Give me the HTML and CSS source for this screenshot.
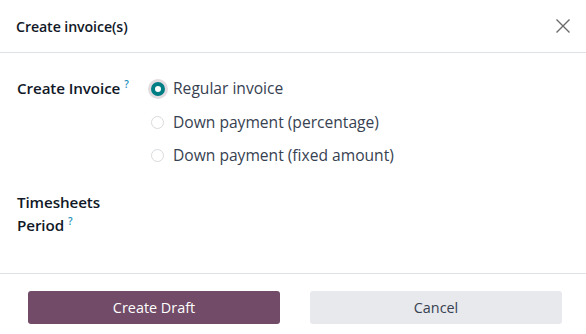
FILE: index.html
```html
<!DOCTYPE html>
<html>
<head>
<meta charset="utf-8">
<link rel="stylesheet" href="styles.css">
</head>
<body>
<div class="dialog">
  <header class="head">
    <h4 class="title">Create invoice(s)</h4>
    <button class="close" aria-label="Close">
      <svg width="16" height="16" viewBox="0 0 16 16"><path d="M1.5 1.5L14.5 14.5M14.5 1.5L1.5 14.5" stroke="#6b6b6b" stroke-width="1.4" fill="none"/></svg>
    </button>
  </header>
  <main class="body">
    <div class="row">
      <div class="label">Create Invoice<sup class="help">?</sup></div>
      <div class="radios">
        <label class="opt"><span class="radio checked"></span>Regular invoice</label>
        <label class="opt"><span class="radio"></span>Down payment (percentage)</label>
        <label class="opt"><span class="radio"></span>Down payment (fixed amount)</label>
      </div>
    </div>
    <div class="row second">
      <div class="label">Timesheets<br>Period<sup class="help">?</sup></div>
    </div>
  </main>
  <footer class="foot">
    <button class="btn primary">Create Draft</button>
    <button class="btn secondary">Cancel</button>
  </footer>
</div>
</body>
</html>
```
FILE: styles.css
```css
html, body {
  margin: 0;
  padding: 0;
  background: #fff;
}
body {
  font-family: "Open Sans", "Noto Sans", sans-serif;
  color: #374151;
  width: 586px;
  height: 334px;
  overflow: hidden;
}
.dialog {
  display: flex;
  flex-direction: column;
  height: 334px;
}
.head {
  height: 53px;
  box-sizing: border-box;
  border-bottom: 1px solid #dee2e6;
  display: flex;
  align-items: center;
  justify-content: space-between;
  padding: 0 13px 0 16px;
}
.title {
  margin: 0;
  font-size: 14.2px;
  font-weight: 600;
  color: #111827;
  letter-spacing: -0.1px;
}
.close {
  border: 0;
  background: none;
  padding: 0;
  width: 20px;
  height: 20px;
  display: flex;
  align-items: center;
  justify-content: center;
}
.body {
  flex: 1;
  padding: 24px 16px 0 17px;
  border-bottom: 1px solid #dee2e6;
}
.row {
  display: flex;
}
.label {
  width: 133px;
  font-size: 15.2px;
  font-weight: 600;
  color: #111827;
  line-height: 23px;
  letter-spacing: -0.1px;
}
.help {
  color: #1b8fbb;
  font-size: 10px;
  font-weight: 600;
  margin-left: 4px;
  vertical-align: top;
  position: relative;
  top: -4px;
}
.radios {
  display: flex;
  flex-direction: column;
  gap: 10.5px;
}
.opt {
  display: flex;
  align-items: center;
  font-size: 15.6px;
  line-height: 23px;
  color: #374151;
  letter-spacing: 0;
}
.radio {
  width: 13px;
  height: 13px;
  box-sizing: border-box;
  border: 1px solid #d8dadd;
  border-radius: 50%;
  margin: 0 9px 0 1px;
  background: #fff;
}
.radio.checked {
  width: 14px;
  height: 14px;
  border: 4px solid #017e84;
  box-shadow: 0 0 0 3px #e2dbe0;
  margin-left: 1px;
  margin-right: 8px;
}
.second {
  margin-top: 24px;
}
.foot {
  height: 60px;
  display: flex;
  gap: 30px;
  padding: 17px 24px 0 28px;
  box-sizing: border-box;
}
.btn {
  width: 252px;
  height: 33px;
  border: 0;
  border-radius: 3px;
  font-family: inherit;
  font-size: 14.4px;
}
.primary {
  background: #714b67;
  color: #fff;
}
.secondary {
  background: #e7e9ed;
  color: #374151;
}
```
